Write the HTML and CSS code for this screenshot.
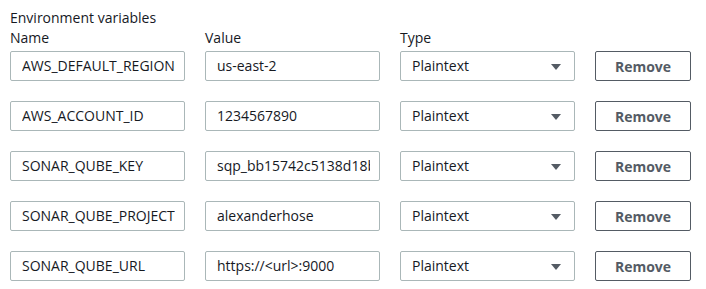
FILE: index.html
```html
<!DOCTYPE html>
<html lang="en">

<head>
    <meta charset="UTF-8">
    <meta name="viewport" content="width=device-width, initial-scale=1.0">
    <title>Environment variables</title>

    <link rel="stylesheet" href="styles.css">
</head>

<body>
    <div class="env">
        <div class="env-title">Environment variables</div>
        <!-- 表头 -->
        <div class="env-row env-head">
            <label>Name</label>
            <label>Value</label>
            <label>Type</label>
            <span></span>
        </div>
        <!-- 每一行变量 -->
        <div class="env-row">
            <div class="field"><span>AWS_DEFAULT_REGION</span></div>
            <div class="field"><span>us-east-2</span></div>
            <div class="field select"><span>Plaintext</span><i class="caret"></i></div>
            <button class="remove">Remove</button>
        </div>
        <div class="env-row">
            <div class="field"><span>AWS_ACCOUNT_ID</span></div>
            <div class="field"><span>1234567890</span></div>
            <div class="field select"><span>Plaintext</span><i class="caret"></i></div>
            <button class="remove">Remove</button>
        </div>
        <div class="env-row">
            <div class="field"><span>SONAR_QUBE_KEY</span></div>
            <div class="field"><span>sqp_bb15742c5138d18b</span></div>
            <div class="field select"><span>Plaintext</span><i class="caret"></i></div>
            <button class="remove">Remove</button>
        </div>
        <div class="env-row">
            <div class="field"><span>SONAR_QUBE_PROJECT</span></div>
            <div class="field"><span>alexanderhose</span></div>
            <div class="field select"><span>Plaintext</span><i class="caret"></i></div>
            <button class="remove">Remove</button>
        </div>
        <div class="env-row">
            <div class="field"><span>SONAR_QUBE_URL</span></div>
            <div class="field"><span>https://&lt;url&gt;:9000</span></div>
            <div class="field select"><span>Plaintext</span><i class="caret"></i></div>
            <button class="remove">Remove</button>
        </div>
    </div>
</body>

</html>
```

FILE: styles.css
```css
* {
    margin: 0;
    padding: 0;
    box-sizing: border-box;
}

body {
    background: #ffffff;
    color: #16191f;
    font-family: "Open Sans", "Liberation Sans", sans-serif;
    font-size: 14px;
}

.env {
    padding: 8px 10px 0 10px;
}

.env-title {
    height: 20px;
    line-height: 20px;
}

.env-row {
    display: grid;
    grid-template-columns: 175px 175px 175px 96px;
    column-gap: 20px;
    align-items: center;
    margin-bottom: 20px;
}

.env-head {
    margin-bottom: 3px;
}

.env-head label {
    line-height: 20px;
}

.field {
    height: 30px;
    line-height: 28px;
    padding: 0 9px 0 11px;
    border: 1px solid #aab7b8;
    border-radius: 2px;
}

/* 文字超出输入框时裁掉 */
.field span {
    display: block;
    white-space: nowrap;
    overflow: hidden;
}

.select {
    position: relative;
}

.caret {
    position: absolute;
    right: 13px;
    top: 12px;
    width: 0;
    height: 0;
    border-left: 5px solid transparent;
    border-right: 5px solid transparent;
    border-top: 6px solid #545b64;
}

.remove {
    height: 30px;
    border: 1px solid #545b64;
    border-radius: 2px;
    background: #ffffff;
    color: #545b64;
    font-family: inherit;
    font-size: 14px;
    font-weight: bold;
}
```
